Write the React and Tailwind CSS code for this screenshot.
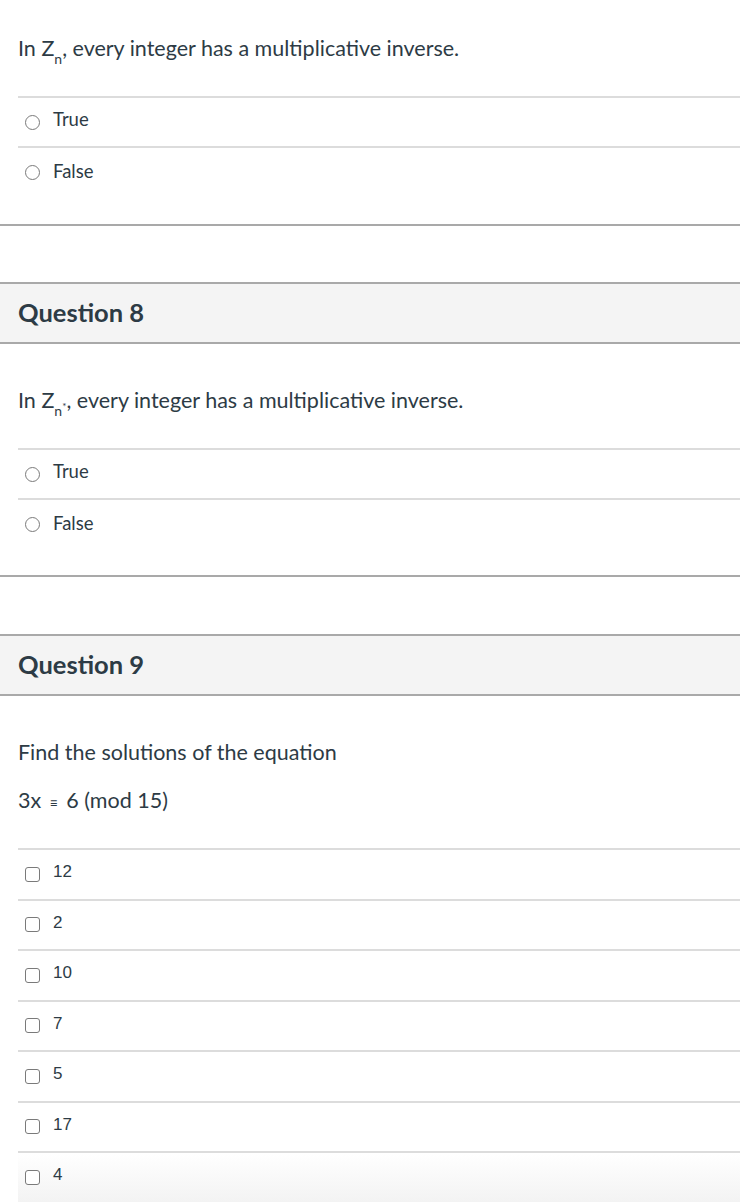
import React from "react";

const font = { fontFamily: "Lato, 'Open Sans', sans-serif" };

function Radio() {
  return <span className="w-[15px] h-[15px] rounded-full border border-[#7a7a7a] bg-white shrink-0" />;
}

function Check() {
  return <span className="w-[15px] h-[15px] rounded-[3px] border border-[#7a7a7a] bg-white shrink-0" />;
}

function Answer({ kind, label, fade, numeric, low }) {
  return (
    <div
      className={
        "flex items-center gap-[13px] pl-[7px] border-t-2 border-[#dcdcdc] " +
        (numeric ? "h-[50.5px] " : "h-[50px] ") +
        (fade ? "bg-gradient-to-b from-white to-[#f3f3f3]" : "")
      }
    >
      {kind === "radio" ? <Radio /> : <Check />}
      <span
        className={
          "text-[#2d3b45] leading-none " +
          (low ? "-mt-[2px] " : "-mt-[5px] ") +
          (numeric ? "text-[17px] font-['Liberation_Sans',sans-serif]" : "text-[18.5px]")
        }
      >
        {label}
      </span>
    </div>
  );
}

function Header({ title }) {
  return (
    <div className="h-[62px] border-y-2 border-[#a9a9a9] bg-[#f4f4f4] flex items-center px-[18px]">
      <h2 className="text-[25.5px] font-bold text-[#2d3b45] leading-none -mt-[1px]">{title}</h2>
    </div>
  );
}

function Zn({ star }) {
  return (
    <>
      Z<sub className="text-[14px] align-[-4px]">n{star && <span className="text-[10px] align-[6px]">*</span>}</sub>
    </>
  );
}

export default function App() {
  return (
    <div className="w-[740px] bg-white text-[#2d3b45]" style={font}>
      {/* Question 7 (tail) */}
      <div className="border-b-2 border-[#a9a9a9]">
        <div className="pl-[18px] pt-[34px]">
          <p className="text-[21.5px] leading-[28px] h-[62px]">
            In <Zn />, every integer has a multiplicative inverse.
          </p>
          <Answer kind="radio" label="True" />
          <Answer kind="radio" label="False" low />
          <div className="h-[28px]" />
        </div>
      </div>

      <div className="h-[56px]" />

      {/* Question 8 */}
      <div className="border-b-2 border-[#a9a9a9]">
        <Header title="Question 8" />
        <div className="pl-[18px] pt-[42px]">
          <p className="text-[21.5px] leading-[28px] h-[62px]">
            In <Zn star />, every integer has a multiplicative inverse.
          </p>
          <Answer kind="radio" label="True" />
          <Answer kind="radio" label="False" low />
          <div className="h-[27px]" />
        </div>
      </div>

      <div className="h-[57px]" />

      {/* Question 9 */}
      <div>
        <Header title="Question 9" />
        <div className="pl-[18px] pt-[42px]">
          <p className="text-[21.5px] leading-[28px] mb-[20px]">Find the solutions of the equation</p>
          <p className="text-[21.5px] leading-[28px] h-[62px]">
            3x <span className="text-[14px] mx-[3px]">≡</span> 6 (mod 15)
          </p>
          {["12", "2", "10", "7", "5", "17", "4"].map((n, i) => (
            <Answer key={n} kind="check" label={n} numeric fade={i === 6} />
          ))}
        </div>
      </div>
    </div>
  );
}
